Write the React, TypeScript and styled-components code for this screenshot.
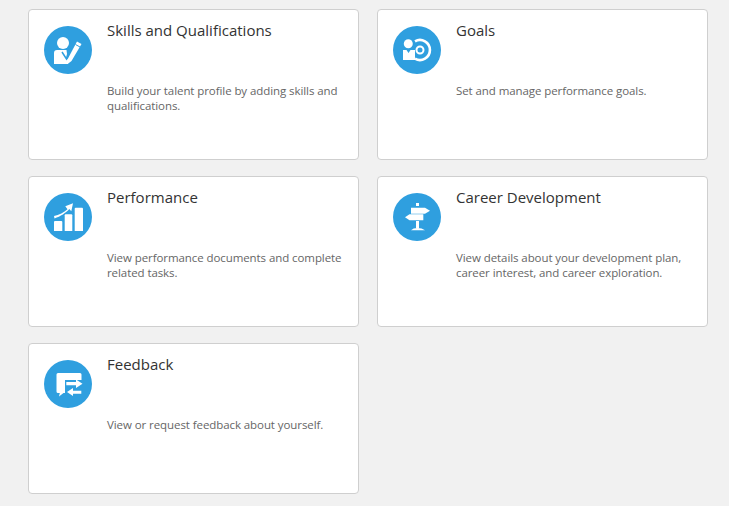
import React from "react";
import styled, { createGlobalStyle } from "styled-components";

const GlobalStyle = createGlobalStyle`
  html, body {
    margin: 0;
    padding: 0;
    background: #f1f1f1;
    font-family: "Open Sans", "Liberation Sans", sans-serif;
  }
`;

const Page = styled.div`
  width: 729px;
  height: 506px;
  overflow: hidden;
  box-sizing: border-box;
  padding: 9px 21px 0 28px;
`;

const Grid = styled.div`
  display: grid;
  grid-template-columns: 331px 331px;
  grid-auto-rows: 151px;
  column-gap: 18px;
  row-gap: 16px;
`;

const Card = styled.div`
  box-sizing: border-box;
  display: flex;
  gap: 15px;
  padding: 16px 15px 0;
  background: #fff;
  border: 1px solid #cfcfcf;
  border-radius: 4px;
`;

const IconCircle = styled.div`
  flex: none;
  width: 48px;
  height: 48px;
  border-radius: 50%;
  background: #2f9fdf;
`;

const Body = styled.div`
  flex: 1;
  min-width: 0;
`;

const Title = styled.h2`
  margin: -7px 0 0;
  font-size: 15px;
  line-height: 22px;
  font-weight: 400;
  letter-spacing: 0;
  color: #333;
`;

const Description = styled.p`
  margin: 42px 0 0;
  font-size: 11.5px;
  line-height: 15px;
  letter-spacing: -0.08px;
  color: #666;
`;

const SkillsIcon = () => (
  <svg width="48" height="48" viewBox="0 0 48 48" fill="#fff">
    <circle cx="19" cy="17" r="6" />
    <path d="M10 27a3 3 0 0 1 3-3h9.500l.5 4 -1 3.500 2 2.500V38H10z" />
    <path d="M18 26l4.500 7 5-9" fill="none" stroke="#2f9fdf" strokeWidth="1.500" />
    <path d="M33 15.500l4.500 2.500 -10 17 -3.500 2.700 -.4-4.500z" />
    <path d="M31.500 18.500l4.500 2.500" fill="none" stroke="#2f9fdf" strokeWidth="1" />
  </svg>
);

const GoalsIcon = () => (
  <svg width="48" height="48" viewBox="0 0 48 48">
    <circle cx="15.300" cy="17.700" r="4.500" fill="#fff" />
    <path d="M10 24h3.500l2 3 2-3H22v10H10z" fill="#fff" />
    <circle cx="27" cy="24" r="3.500" fill="none" stroke="#fff" strokeWidth="2" />
    <path d="M22 15.300A10 10 0 1 1 22 32.700" fill="none" stroke="#fff" strokeWidth="2.600" />
  </svg>
);

const PerformanceIcon = () => (
  <svg width="48" height="48" viewBox="0 0 48 48" fill="#fff">
    <path d="M10 29q0-1 1-1h6.300q1 0 1 1v9H10z" />
    <path d="M20.700 22.300q0-1 1-1h5.600q1 0 1 1V38h-7.600z" />
    <path d="M30.700 15.700q0-1 1-1h6.300q1 0 1 1V38h-8.300z" />
    <path d="M10 23c5-1 10-3.500 13.500-6.800l-2.200-3 7.700-2.900 -1.700 8 -2-2.200C22 19.800 16.500 23.600 10.500 25.500z" />
  </svg>
);

const CareerIcon = () => (
  <svg width="48" height="48" viewBox="0 0 48 48" fill="#fff">
    <rect x="23" y="10" width="3" height="3" />
    <path d="M18 14.700h14l5 3 -5 3H18z" />
    <path d="M30.300 21.300H16.500l-4.500 3 4.500 3h13.800z" />
    <path d="M23 28h3v7.500h-3z" />
    <path d="M18 37.300q2-2.300 6.500-2.300t7.500 2.300z" />
  </svg>
);

const FeedbackIcon = () => (
  <svg width="48" height="48" viewBox="0 0 48 48" fill="#fff">
    <path d="M14 13h22q1.500 0 1.500 1.500V20H21v13h-1.500l-4.500 3.500 .8-3.500H14q-1.500 0-1.500-1.500v-17Q12.500 13 14 13z" />
    <path d="M22.300 22H32v-2.500l6.500 4.200 -6.500 4.300V25.300h-9.700z" />
    <path d="M37.300 33.700H29V36l-6-4 6-4v2.700h8.300z" />
  </svg>
);

const items = [
  {
    title: "Skills and Qualifications",
    description: "Build your talent profile by adding skills and qualifications.",
    icon: <SkillsIcon />,
  },
  {
    title: "Goals",
    description: "Set and manage performance goals.",
    icon: <GoalsIcon />,
  },
  {
    title: "Performance",
    description: "View performance documents and complete related tasks.",
    icon: <PerformanceIcon />,
  },
  {
    title: "Career Development",
    description: "View details about your development plan, career interest, and career exploration.",
    icon: <CareerIcon />,
  },
  {
    title: "Feedback",
    description: "View or request feedback about yourself.",
    icon: <FeedbackIcon />,
  },
];

const App: React.FC = () => {
  return (
    <Page>
      <GlobalStyle />
      <Grid>
        {items.map((item) => (
          <Card key={item.title}>
            <IconCircle>{item.icon}</IconCircle>
            <Body>
              <Title>{item.title}</Title>
              <Description>{item.description}</Description>
            </Body>
          </Card>
        ))}
      </Grid>
    </Page>
  );
};

export default App;
